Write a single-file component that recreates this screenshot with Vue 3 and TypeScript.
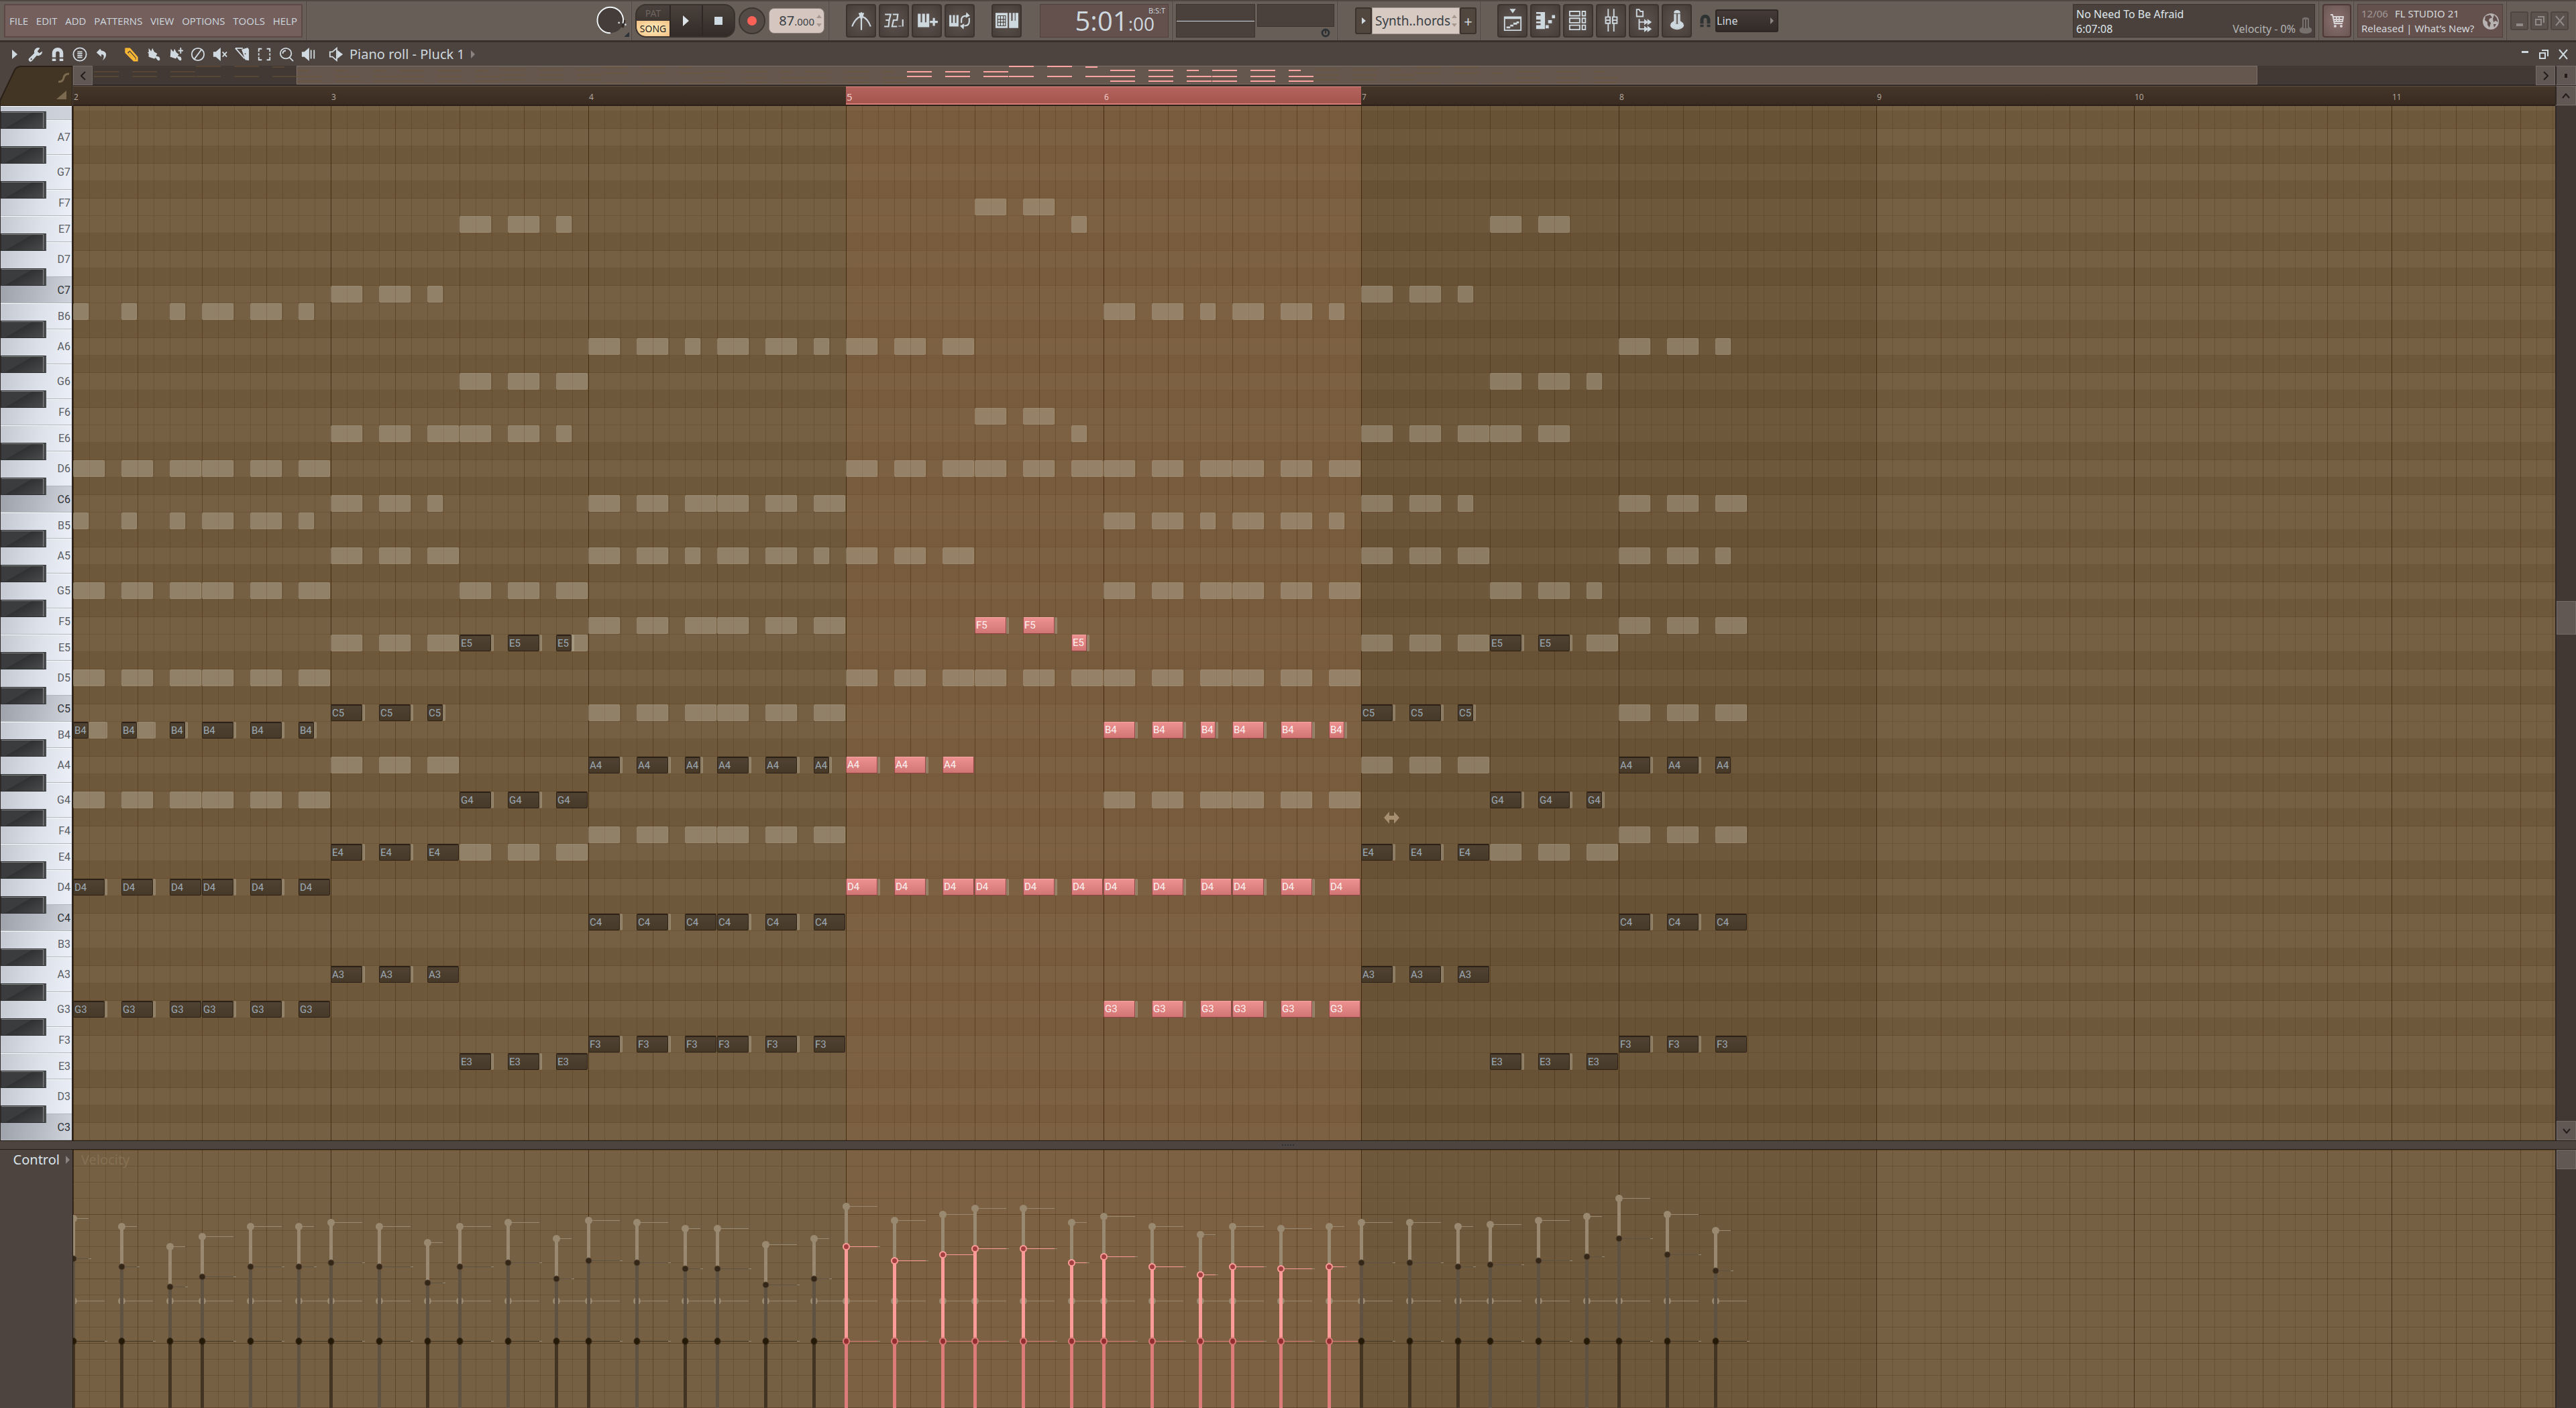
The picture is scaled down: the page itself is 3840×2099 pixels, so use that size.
<script setup lang="ts">
interface Note { key: string; label: string; x: number; y: number; w: number; selected: boolean }
interface Ghost { key: string; x: number; y: number; w: number }
interface Icon { name: string; fill?: string; line?: string; accent?: boolean }

const STEP = 24
const BAR = 384
const ROW = 26
const FIRST_BAR = 2
const PITCHES: Record<string, number> = { C: 0, D: 2, E: 4, F: 5, G: 7, A: 9, B: 11 }

const SIX = '0:2 3:2 6:2 8:2 11:2 14:2'
const MELODY = '0:2 3:2 6:1 8:2 11:2 14:1'
const FRONT = '0:2 3:2 6:2'
const FRONT_SHORT = '0:2 3:2 6:1'
const BACK = '8:2 11:2 14:2'
const BACK_SHORT = '8:2 11:2 14:1'

const phrases: Record<number, [string, string][]> = {
  2: [['B4', '0:1 3:1 6:1 8:2 11:2 14:1'], ['D4', SIX], ['G3', SIX]],
  3: [['C5', FRONT_SHORT], ['E4', FRONT], ['A3', FRONT], ['E5', BACK_SHORT], ['G4', BACK], ['E3', BACK]],
  4: [['A4', MELODY], ['C4', SIX], ['F3', SIX]],
  5: [['A4', FRONT], ['F5', '8:2 11:2'], ['E5', '14:1'], ['D4', SIX]],
  6: [['B4', MELODY], ['D4', SIX], ['G3', SIX]],
  7: [['C5', FRONT_SHORT], ['E4', FRONT], ['A3', FRONT], ['E5', '8:2 11:2'], ['G4', BACK_SHORT], ['E3', BACK]],
  8: [['A4', FRONT_SHORT], ['C4', FRONT], ['F3', FRONT]],
}

const parse = (pattern: string) => pattern.split(' ').map((p) => p.split(':').map(Number) as [number, number])
const pitch = (name: string) => PITCHES[name[0]] + 12 * (Number(name[1]) - 3)
const xOf = (bar: number, step: number) => (bar - FIRST_BAR) * BAR + step * STEP
const yOf = (n: number) => ROW * (59 - n) - 18
const isSelected = (bar: number) => bar === 5 || bar === 6

const notes: Note[] = []
const ghostMap = new Map<string, Ghost>()
const addGhost = (x: number, y: number, w: number) => {
  const key = `${x}-${y}-${w > 8}`
  if (!ghostMap.has(key)) ghostMap.set(key, { key, x, y, w })
}
for (const [barText, lines] of Object.entries(phrases)) {
  const bar = Number(barText)
  for (const [label, pattern] of lines) {
    const n = pitch(label)
    for (const [step, len] of parse(pattern)) {
      const x = xOf(bar, step)
      const w = len * STEP - 1
      notes.push({ key: `${label}-${x}`, label, x, y: yOf(n), w, selected: isSelected(bar) })
      if (n + 12 < 60) addGhost(x, yOf(n + 12), w)
      if (n + 24 < 60) addGhost(x, yOf(n + 24), w)
      const joined = (len === 2 && (step === 6 || step === 14)) || (bar === 8 && step === 6)
      const long = bar === 2 && label === 'B4' && step < 6
      if (long) addGhost(x + w, yOf(n), 28)
      else if (!joined) addGhost(x + w, yOf(n), 4)
    }
  }
}
const ghosts = [...ghostMap.values()]

const overview = [1, 2, 3, 4, 5, 6, 7, 8].flatMap((bar) =>
  phrases[bar === 1 ? 5 : bar].flatMap(([label, pattern]) =>
    parse(pattern).map(([step, len]) => ({
      x: 1214 + 303 * (bar - 5) + Math.round(step * 19),
      y: 29 - pitch(label),
      w: len * 19,
      selected: isSelected(bar),
    })),
  ),
)

const STEPS = [0, 3, 6, 8, 11, 14]
const levels: Record<number, number[]> = {
  2: [1816, 1828, 1858, 1843, 1828, 1828],
  3: [1822, 1828, 1852, 1828, 1822, 1846],
  4: [1819, 1822, 1831, 1831, 1855, 1846],
  5: [1798, 1819, 1810, 1801, 1801, 1822],
  6: [1813, 1828, 1840, 1828, 1831, 1828],
  7: [1822, 1822, 1828, 1825, 1819, 1813],
  8: [1786, 1810, 1834],
}
const shortSteps: Record<number, number[]> = { 2: [0, 3, 6, 14], 3: [6, 14], 4: [6, 14], 5: [14], 6: [6, 14], 7: [6, 14], 8: [6] }
const paleSteps: Record<number, number[]> = { 2: [11, 14], 3: [3, 8, 11], 4: [3, 8], 7: [8, 11, 14] }
const stems = Object.entries(levels).flatMap(([barText, tops]) => {
  const bar = Number(barText)
  return tops.map((top, i) => {
    const step = STEPS[i]
    return {
      x: xOf(bar, step),
      y: top - 1714,
      len: shortSteps[bar].includes(step) ? 23 : 47,
      bass: 47,
      selected: isSelected(bar),
      pale: (paleSteps[bar] ?? []).includes(step),
    }
  })
})

const keys = [7, 6, 5, 4, 3].flatMap((octave) =>
  ['B', 'A', 'G', 'F', 'E', 'D', 'C'].map((name) => ({
    label: `${name}${octave}`,
    tall: 'AGD'.includes(name),
    sharp: !'FC'.includes(name),
    root: name === 'C',
    first: name === 'B' && octave === 7,
  })),
)
const bars = [2, 3, 4, 5, 6, 7, 8, 9, 10, 11]
const menus = ['FILE', 'EDIT', 'ADD', 'PATTERNS', 'VIEW', 'OPTIONS', 'TOOLS', 'HELP']

const tools: Icon[] = [
  { name: 'Tools', fill: 'M17 1a7 7 0 0 0-7 9L2 18a3 3 0 0 0 4 5l8-9a7 7 0 0 0 9-7l-5 3-3-3 4-5zM4 19l2-1 0 3-2 0z' },
  { name: 'Snap', fill: 'M3 17V10a9 9 0 0 1 18 0v7h-6v-7a3 3 0 0 0-6 0v7zM3 19h6v4H3zM15 19h6v4h-6z' },
  { name: 'Stamp', line: 'M12 1.500a10.500 10.500 0 1 0 0 21a10.500 10.500 0 1 0 0-21M8 8h8M8 11h8M8 14h8M8 17h8' },
  { name: 'Undo', fill: 'M9 3 3 9l8 7v-4c5 0 5 4 2 10 8-6 8-15-2-16z' },
]
const modes: Icon[] = [
  { name: 'Draw', line: 'M3 3h6l12 14v5h-5L3 9zM4 8l5-4M8 9l10 11M3 3v6', accent: true },
  { name: 'Paint', fill: 'M4 2l4 5 2-5 3 6 5 3-5 8-9-3zM13 14l8 2c3 5 0 8-3 5zM2 9l4-1 10 8-2 3z' },
  { name: 'Paint drum', fill: 'M4 3l4 5 2-5 3 6 4 3-5 7-9-3zM12 14l8 2c3 5 0 8-3 5zM19 1h2v4h3v2h-3v4h-2V7h-3V5h3z' },
  { name: 'Delete', line: 'M12 2a10 10 0 1 0 0 20a10 10 0 1 0 0-20M6 20 18 4' },
  { name: 'Mute', fill: 'M1 8h4l8-7v22l-8-7H1z', line: 'M16 8l7 8M23 8l-7 8' },
  { name: 'Slice', fill: 'M11 4l10-3 2 3v18l-6-1zM17 10a1 1 0 1 0 .1 0z', line: 'M1 2l15 17M1 2h12' },
  { name: 'Select', line: 'M3 8V3h5M16 3h5v5M21 16v5h-5M8 21H3v-5M3 10v4M21 10v4' },
  { name: 'Zoom', line: 'M11 2a9 8.500 0 1 0 0 17a9 8.500 0 1 0 0-17M17 17l6 6M6 11c0-3 2-5 5-5' },
  { name: 'Playback', fill: 'M1 8h4l8-7v22l-8-7H1zM15 5h2v14h-2zM20 5h2v14h-2z' },
]
const recordModes: Icon[] = [
  { name: 'Metronome', line: 'M16 4v25M3 24c3-8 6-12 12-14M29 24c-3-8-6-12-12-14', fill: 'M12 5h8l-4 12z' },
  { name: 'Countdown', line: 'M3 7h8l-2 8h-5 5l-1 9H2M14 7h7l-1 8h-5l-2 9h7M23 23v1M28 14v10M25 23v1' },
  { name: 'Overdub', fill: 'M3 6h4v12h2V6h4v12h2V6h4v19H3zM24 12h3v4h4v3h-4v4h-3v-4h-4v-3h4z' },
  { name: 'Loop record', fill: 'M1 8h3v11h2V8h3v11h2V8h3v16H1zM25 4l5 5-6 3zM21 28l-5-5 6-3z', line: 'M18 19v-4c0-4 3-6 7-6M29 12v5c0 4-3 6-7 6' },
]
const typing: Icon = { name: 'Typing keyboard', fill: 'M0 5h17v21H0zM19 5h3v11h2V5h3v11h1V5h4v21H19z' }
const windows: Icon[] = [
  { name: 'Playlist', line: 'M3 13h26v21H3zM3 15h26', fill: 'M11 0h10l-5 7zM6 28h6v3H6zM12 25h5v3h-5zM17 22h6v3h-6zM22 20h4v3h-4z' },
  { name: 'Piano roll', fill: 'M1 5h14v27H1v-6h7v-3H1v-3h7v-3H1v-6h7V8H1zM16 26h5v5h-5zM20 18h6v5h-6zM26 10h5v5h-5z' },
  { name: 'Channel rack', line: 'M2 4h16v7H2zM2 15h16v7H2zM2 26h16v7H2zM22 4h5v7h-5zM22 15h5v7h-5zM22 26h5v7h-5z' },
  { name: 'Mixer', line: 'M11 0v12M11 24v12M20 0v12M20 24v12M7 13h7v10H7zM18 13h7v10h-7zM8 18h5M19 18h5' },
  { name: 'Browser', line: 'M4 1h4l2 3h4v8H4zM8 16v16h8M8 21h8', fill: 'M16 16l5 4v-4l7 5-7 5v-4l-5 4zM16 27l5 4v-4l7 5-7 5v-4l-5 4z' },
  { name: 'Plugin picker', line: 'M6 25c0 4 4 7 10 7s10-3 10-7M14 8v16M18 8v16', fill: 'M11 5c1-4 9-4 10 0v2H11zM11 8h2v16h6V8h2v11l5 4c1 5-4 8-10 8s-11-3-10-8l5-4z' },
]
</script>

<template>
  <div class="app">
    <header class="top">
      <div class="sec first">
        <nav class="menu"><button v-for="m in menus" :key="m">{{ m }}</button></nav>
      </div>
      <div class="sec knob-sec">
        <svg class="knob" viewBox="0 0 56 56" aria-hidden="true">
          <circle cx="25" cy="27" r="20" fill="#453d39" />
          <path d="M43 38a21 21 0 0 0 3-11" fill="none" stroke="#352d29" stroke-width="4" />
          <path d="M25 47a20 20 0 1 1 19-15" fill="none" stroke="#f0f6f8" stroke-width="2" />
          <circle cx="38" cy="31" r="1.500" fill="#cfd6da" /><circle cx="48" cy="34" r="1.500" fill="#cfd6da" />
          <path d="M54 45v8h-8z" fill="#2c3336" />
        </svg>
      </div>
      <div class="sec transport">
        <div class="deck">
          <div class="mode"><button class="pat">PAT</button><button class="song">SONG</button></div>
          <button class="deck-btn" aria-label="Play"><svg width="12" height="18" viewBox="0 0 12 18"><path d="M1 1l9 8-9 8z" fill="#dbe3e8" /></svg></button>
          <button class="deck-btn" aria-label="Stop"><svg width="12" height="12"><rect width="12" height="12" fill="#d0dae2" /></svg></button>
        </div>
        <button class="record" aria-label="Record"><i></i></button>
        <div class="tempo"><b>87</b><span>.000</span>
          <svg width="8" height="18" viewBox="0 0 8 18" fill="#a8988f"><path d="M4 0l4 5H0zM4 18l4-5H0z" /></svg>
        </div>
      </div>
      <div class="sec rec">
        <button v-for="i in recordModes" :key="i.name" class="tile" :aria-label="i.name">
          <svg width="34" height="34" viewBox="0 0 32 32"><path v-if="i.fill" :d="i.fill" fill="#ced8df" /><path v-if="i.line" :d="i.line" fill="none" stroke="#ced8df" stroke-width="2" /></svg>
        </button>
        <button class="tile apart" :aria-label="typing.name">
          <svg width="34" height="34" viewBox="0 0 32 32"><path :d="typing.fill" fill="#ced8df" /><path d="M3 9h11v14H3zM3 14h11M3 18h11M7 9v14M11 9v14" fill="none" stroke="#4b423d" /></svg>
        </button>
        <div class="clock"><span class="big">5:01</span><span class="small">:00</span><span class="unit">B:S:T</span></div>
      </div>
      <div class="sec scopes">
        <div class="scope"><i></i></div>
        <div class="meter"><div class="cpu"></div>
          <svg width="18" height="14" viewBox="0 0 18 14"><circle cx="9" cy="7" r="5" fill="none" stroke="#2c3235" stroke-width="3" /><path d="M9 2v6" stroke="#2c3235" stroke-width="2" /></svg>
        </div>
      </div>
      <div class="sec pattern">
        <button class="side" aria-label="Pattern menu"><svg width="6" height="10"><path d="M0 0l6 5-6 5z" fill="#ced8df" /></svg></button>
        <button class="name">Synth..hords<svg width="8" height="18" viewBox="0 0 8 18" fill="#a8988f"><path d="M4 0l4 5H0zM4 18l4-5H0z" /></svg></button>
        <button class="side plus" aria-label="Add pattern">+</button>
      </div>
      <div class="sec wide">
        <button v-for="i in windows" :key="i.name" class="tile" :aria-label="i.name">
          <svg width="30" height="36" viewBox="0 0 32 38"><path v-if="i.fill" :d="i.fill" fill="#ced8df" /><path v-if="i.line" :d="i.line" fill="none" stroke="#ced8df" stroke-width="2" /></svg>
        </button>
        <svg class="mag" width="20" height="20" viewBox="0 0 24 24" fill="#2f3334"><path d="M3 17V10a9 9 0 0 1 18 0v7h-6v-7a3 3 0 0 0-6 0v7zM3 19h6v4H3zM15 19h6v4h-6z" /></svg>
        <div class="snap"><select aria-label="Snap to"><option>Line</option></select><svg width="5" height="10"><path d="M0 0l5 5-5 5z" fill="#8a8683" /></svg></div>
        <div class="hint">
          <p>No Need To Be Afraid</p>
          <p class="row"><span>6:07:08</span><span class="dim">Velocity - 0%</span></p>
          <svg width="22" height="26" viewBox="0 0 22 26"><path d="M6 3c1-3 9-3 10 0v12l4 3c1 5-2 7-9 7s-10-2-9-7l4-3z" fill="#77716d" /><path d="M9 4v13M13 4v13" stroke="#48403b" stroke-width="2" /></svg>
        </div>
      </div>
      <div class="sec shop">
        <button class="tile cart" aria-label="Shop"><svg width="22" height="22" viewBox="0 0 22 22" fill="none" stroke="#d8d4d6" stroke-width="2"><path d="M1 2h3l3 13h12M5 5h15l-1 7H7M10 5v7M14 5v7M6 9h13" /><circle cx="8" cy="19" r="1" /><circle cx="17" cy="19" r="1" /></svg></button>
      </div>
      <div class="sec news-sec">
        <div class="news">
          <p><span class="date">12/06</span>FL STUDIO 21</p>
          <p>Released | What’s New?</p>
          <svg width="26" height="26" viewBox="0 0 26 26"><circle cx="13" cy="13" r="12" fill="#b8b3b3" /><path d="M5 5l7-2 3 4-4 2-1 3 3 3-2 7-3-4v-4L4 11zM18 3l4 5 2 6-4-2-3 2-1-5zM17 17l4 0-3 5z" fill="#63504d" /></svg>
        </div>
      </div>
      <div class="sec win">
        <button aria-label="Minimise"><svg width="12" height="16"><path d="M1 12h10v4H1z" fill="#8f8a86" /></svg></button>
        <button aria-label="Restore"><svg width="14" height="16" viewBox="0 0 14 16" fill="none" stroke="#8f8a86" stroke-width="2"><path d="M4 2h9v9M1 6h8v8H1z" /></svg></button>
        <button aria-label="Close"><svg width="14" height="16" viewBox="0 0 14 16" stroke="#8f8a86" stroke-width="2"><path d="M1 1l12 14M13 1L1 15" /></svg></button>
      </div>
    </header>

    <div class="bar2">
      <svg class="tri" width="8" height="14"><path d="M0 0l8 7-8 7z" fill="#ced8df" /></svg>
      <button v-for="i in tools" :key="i.name" class="ico" :aria-label="i.name">
        <svg width="22" height="22" viewBox="0 0 24 24"><path v-if="i.fill" :d="i.fill" fill="#d0d9e0" /><path v-if="i.line" :d="i.line" fill="none" stroke="#d0d9e0" stroke-width="2" /></svg>
      </button>
      <span class="split"></span>
      <button v-for="i in modes" :key="i.name" class="ico" :aria-label="i.name">
        <svg width="22" height="22" viewBox="0 0 24 24"><path v-if="i.fill" :d="i.fill" fill="#d0d9e0" /><path v-if="i.line" :d="i.line" fill="none" :stroke="i.accent ? '#fdb933' : '#d0d9e0'" :stroke-width="i.accent ? 3 : 2" /></svg>
      </button>
      <span class="split"></span>
      <svg width="22" height="22" viewBox="0 0 24 24"><path d="M2 8h4l7-6v20l-7-6H2z" fill="none" stroke="#d0d9e0" stroke-width="2" /><path d="M14 5l9 7-9 7z" fill="#d0d9e0" /></svg>
      <h1>Piano roll - Pluck 1</h1>
      <svg width="6" height="12"><path d="M0 0l6 6-6 6z" fill="#8a8380" /></svg>
      <div class="child-win">
        <button aria-label="Minimise"><svg width="12" height="16"><path d="M1 3h10v3H1z" fill="#ced8df" /></svg></button>
        <button aria-label="Restore"><svg width="14" height="16" viewBox="0 0 14 16" fill="none" stroke="#ced8df" stroke-width="2"><path d="M4 2h9v9M1 6h8v8H1z" /></svg></button>
        <button aria-label="Close"><svg width="14" height="16" viewBox="0 0 14 16" stroke="#ced8df" stroke-width="2"><path d="M1 1l12 14M13 1L1 15" /></svg></button>
      </div>
    </div>

    <div class="heads">
      <svg class="corner" width="108" height="60" viewBox="0 0 108 60">
        <path d="M0 60V52L22 6Q25 1 32 1H108V60z" fill="#433523" stroke="#2a2017" stroke-width="2" />
        <path d="M87 24q7 0 8-6 1-6 8-6" fill="none" stroke="#7b6a50" stroke-width="3" /><path d="M99 37v13H84z" fill="#7b6a50" />
      </svg>
      <div class="heads-main">
        <div class="scroller">
          <button class="sb" aria-label="Scroll left"><svg width="8" height="14" fill="none" stroke="#231c19" stroke-width="2"><path d="M7 1L1 7l6 6" /></svg></button>
          <div class="track">
            <div class="thumb"></div>
            <svg class="mini"><rect v-for="(o, i) in overview" :key="i" :x="o.x" :y="o.y" :width="o.w - 1" height="2" :fill="o.selected ? '#ffa5a3' : '#6b5336'" :opacity="o.selected ? 1 : 0.5" /></svg>
          </div>
          <button class="sb" aria-label="Scroll right"><svg width="8" height="14" fill="none" stroke="#231c19" stroke-width="2"><path d="M1 1l6 6-6 6" /></svg></button>
          <button class="sb last" aria-label="Zoom"><svg width="4" height="6"><path d="M0 0h4v6H0z" fill="#231c19" /></svg></button>
        </div>
        <div class="ruler-row">
          <ol class="ruler">
            <li v-for="b in bars" :key="b" :class="{ on: b === 5 || b === 6, start: b === 5 }">{{ b }}</li>
          </ol>
          <button class="sb last" aria-label="Scroll up"><svg width="12" height="8" fill="none" stroke="#231c19" stroke-width="2"><path d="M1 7l5-6 5 6" /></svg></button>
        </div>
      </div>
    </div>

    <main class="roll">
      <div class="keys">
        <div v-for="k in keys" :key="k.label" class="key" :class="{ tall: k.tall, sharp: k.sharp, root: k.root, first: k.first }"><span>{{ k.label }}</span></div>
      </div>
      <div class="canvas">
        <i v-for="g in ghosts" :key="g.key" class="ghost" :style="{ left: g.x + 'px', top: g.y + 'px', width: g.w + 'px' }"></i>
        <div v-for="n in notes" :key="n.key" class="note" :class="{ sel: n.selected }" :style="{ left: n.x + 'px', top: n.y + 'px', width: n.w + 'px' }">{{ n.label }}</div>
        <svg class="cursor" width="23" height="18" viewBox="0 0 23 18"><path d="M0 9l8-9v6h7V0l8 9-8 9v-6H8v6z" fill="#a58f70" /></svg>
      </div>
      <div class="vbar"><div class="vthumb"></div><button class="sb down" aria-label="Scroll down"><svg width="12" height="8" fill="none" stroke="#231c19" stroke-width="2"><path d="M1 1l5 6 5-6" /></svg></button></div>
    </main>

    <div class="splitter"><i v-for="d in 5" :key="d"></i></div>

    <section class="control">
      <div class="control-head"><button>Control<svg width="6" height="12"><path d="M0 0l6 6-6 6z" fill="#8a8380" /></svg></button></div>
      <div class="lane">
        <span class="lane-name">Velocity</span>
        <svg class="stems">
          <g v-for="s in stems" :key="s.x" fill="#998970">
            <rect :x="s.x - 2" :y="s.y" width="5" height="60" />
            <rect :x="s.x" :y="s.y" :width="s.len" height="1" />
            <ellipse :cx="s.x + 0.5" :cy="s.y + 0.5" rx="5.500" ry="5.500" />
            <rect :x="s.x" y="225" :width="s.bass" height="1" />
            <ellipse :cx="s.x + 0.5" cy="225.500" rx="5.500" ry="5.500" />
            <rect :x="s.x" :y="s.y + 60" :width="s.len + 4" height="1" />
            <rect :x="s.x" y="285" :width="s.bass + 4" height="1" />
          </g>
          <g v-for="s in stems" :key="s.x" :class="{ hot: s.selected, pale: s.pale }" class="stem">
            <rect class="up" :x="s.x - 2" :y="s.y + 60" width="5" :height="225 - s.y" />
            <rect class="up" :x="s.x" :y="s.y + 60" :width="s.len" height="1" />
            <rect class="low" :x="s.x - 2" y="285" width="5" height="2000" />
            <rect class="low-line" :x="s.x" y="285" :width="s.bass" height="1" />
            <ellipse class="dot" :cx="s.x + 0.5" :cy="s.y + 60.500" rx="4.500" ry="4.500" />
            <ellipse class="dot base" :cx="s.x + 0.5" cy="285.500" rx="4.500" ry="5" />
          </g>
        </svg>
      </div>
      <div class="vbar"><div class="vthumb top-thumb"></div></div>
    </section>
  </div>
</template>

<style>
body { margin: 0; background: #4d443f; }
</style>

<style scoped>
.app { display: flex; flex-direction: column; min-height: 100vh; overflow: hidden; font-family: "Noto Sans", sans-serif; font-size: 16px; color: #ced8df; background: #4d443f; }
*, *::after { box-sizing: border-box; }
button, select { font: inherit; color: inherit; background: none; border: 0; padding: 0; margin: 0; }
p, h1, ol { margin: 0; padding: 0; font-weight: 400; }
svg { display: block; flex: none; }

.top { display: flex; flex: none; height: 63px; background: #685e58; border-top: 2px solid #514742; border-bottom: 3px solid #3a302b; }
.sec { display: flex; flex: none; align-items: center; border-right: 1px solid #514742; box-shadow: inset -1px 0 #6f6560; padding-bottom: 4px; padding-top: 4px; }
.first { width: 457px; padding-left: 6px; }
.menu { display: flex; justify-content: space-between; align-items: center; width: 445px; height: 50px; padding: 0 6px; background: #745f5d; border: 2px solid #5c4844; font-family: "Open Sans", sans-serif; font-size: 15px; }
.knob-sec { width: 485px; justify-content: flex-end; }
.knob { width: 56px; height: 54px; }
.transport { width: 294px; padding-left: 5px; }
.deck { display: flex; height: 50px; width: 149px; border-radius: 16px; background: linear-gradient(#4a413c, #332b27); border: 2px solid #3a322d; overflow: hidden; }
.mode { width: 49px; display: flex; flex-direction: column; font-size: 14px; }
.mode button { flex: 1; }
.pat { color: #6c6561; }
.song { color: #2d2521; background: radial-gradient(#fff0c0, #f3bf82); border-radius: 0 0 0 12px; font-size: 14px; }
.deck-btn { flex: 1; display: flex; align-items: center; justify-content: center; border-left: 2px solid #2e2723; }
.record { width: 40px; height: 40px; margin-left: 5px; border-radius: 50%; background: #554b46; border: 2px solid #3d3530; display: flex; align-items: center; justify-content: center; }
.record i { width: 14px; height: 14px; border-radius: 50%; background: #fc6158; }
.tempo { display: flex; align-items: baseline; justify-content: flex-end; width: 83px; height: 38px; margin-left: 5px; padding-right: 3px; border-radius: 8px; background: #d5c7c0; border: 1px solid #8c807a; color: #3a4045; font-size: 15px; line-height: 36px; }
.tempo b { font-weight: 400; font-size: 20px; }
.tempo svg { margin-left: 3px; align-self: center; }
.rec { width: 512px; padding-left: 25px; gap: 4px; }
.tile { display: flex; align-items: center; justify-content: center; width: 45px; height: 50px; border: 2px solid #3c332f; border-radius: 4px; background: radial-gradient(#5f5550, #463d38); }
.apart { margin-left: 21px; }
.clock { position: relative; display: flex; align-items: baseline; justify-content: flex-end; width: 192px; height: 50px; margin-left: 23px; padding-right: 20px; background: #64514e; border: 1px solid #50403c; line-height: 48px; font-family: "Open Sans", sans-serif; }
.big { font-size: 40px; }
.small { font-size: 28px; }
.unit { position: absolute; right: 4px; top: 3px; font-size: 11px; line-height: 12px; }
.scopes { width: 246px; padding-left: 5px; gap: 3px; }
.scope { display: flex; align-items: center; width: 118px; height: 50px; background: #4a413c; border: 1px solid #3c332f; }
.scope i { width: 100%; height: 1px; background: #ced8df; }
.meter { width: 115px; height: 50px; display: flex; flex-direction: column; align-items: flex-end; }
.cpu { width: 115px; height: 35px; background: #4a413c; border: 1px solid #3c332f; }
.meter svg { margin: 2px 4px 0 0; }
.pattern { width: 213px; padding-left: 26px; }
.side { display: flex; align-items: center; justify-content: center; width: 25px; height: 40px; border: 2px solid #3c332f; border-radius: 3px; background: #51473f; }
.plus { font-size: 22px; }
.name { display: flex; align-items: center; justify-content: space-between; width: 131px; height: 40px; padding: 0 3px 0 4px; background: #d7cac3; border: 1px solid #a2958e; color: #3a4045; font-size: 19px; }
.wide { flex: 1 1 auto; padding-left: 25px; gap: 4px; }
.mag { margin: 0 1px 0 6px; }
.snap { display: flex; align-items: center; width: 94px; height: 34px; padding: 0 5px 0 0; border: 2px solid #2e2723; border-radius: 3px; background: linear-gradient(#443b37, #322a26); }
.snap select { flex: 1; appearance: none; }
.hint { position: relative; width: 361px; height: 50px; margin: 0 5px 0 auto; padding: 3px 28px 0 4px; background: #4a413c; border: 1px solid #3b322e; line-height: 22px; color: #dfe7ec; }
.hint .row { display: flex; justify-content: space-between; }
.hint .dim { color: #b3b5b5; }
.hint svg { position: absolute; right: 2px; bottom: 4px; }
.shop { width: 52px; padding-left: 5px; }
.cart { width: 43px; background: radial-gradient(#8a7270, #6b5553); border-color: #4d3835; }
.news-sec { width: 228px; padding-left: 5px; }
.news { position: relative; width: 217px; height: 50px; padding: 2px 5px; background: #64514e; border: 1px solid #50403c; font-size: 15px; line-height: 22px; white-space: nowrap; color: #d6d9dc; }
.date { color: #a19796; margin-right: 10px; }
.news svg { position: absolute; right: 4px; top: 12px; }
.win { width: 103px; padding-left: 5px; gap: 3px; border-right: 0; }
.win button { display: flex; align-items: center; justify-content: center; width: 27px; height: 28px; background: #5c524d; border: 2px solid #4e4540; border-radius: 3px; }

.bar2 { display: flex; flex: none; align-items: center; height: 35px; padding-left: 18px; background: #4d443f; }
.tri { margin-right: 10px; }
.ico { display: flex; justify-content: center; width: 33px; }
.split { width: 11px; }
.split + svg { margin-left: 3px; }
.bar2 h1 { font-size: 20px; line-height: 32px; margin: 0 9px; }
.child-win { display: flex; gap: 15px; margin: 0 12px 0 auto; }

.heads { display: flex; flex: none; height: 60px; }
.corner { width: 108px; }
.heads-main { flex: 1; min-width: 0; margin-left: 1px; display: flex; flex-direction: column; }
.scroller { display: flex; height: 30px; background: #423934; border-bottom: 2px solid #2f2723; }
.sb { flex: none; display: flex; align-items: center; justify-content: center; width: 29px; height: 29px; background: #625853; border: 1px solid #756b66; }
.last { width: 31px; border-left: 2px solid #2f2723; }
.track { position: relative; flex: 1; display: flex; }
.thumb { flex: 1; margin: 0 415px 0 304px; background: #65574e; border: 1px solid #7c706a; }
.mini { position: absolute; left: 0; top: 0; width: 100%; height: 100%; }
.ruler-row { display: flex; height: 30px; }
.ruler { flex: 1; min-width: 0; overflow: hidden; display: flex; list-style: none; background: linear-gradient(#45362a, #392b20); border-top: 1px solid #5d4c40; border-bottom: 2px solid #2c2119; }
.ruler li { flex: none; width: 384px; padding: 7px 0 0 1px; font-size: 12px; line-height: 18px; font-family: "Open Sans", sans-serif; color: #b5aca2; }
.ruler .on { background: linear-gradient(#b4645d, #a5544e); border-bottom: 2px solid #d67f79; box-shadow: inset 0 1px #d67f79; color: #f7d4d0; }
.ruler .start { font-size: 15px; padding-top: 6px; }

.roll { display: flex; flex: none; }
.keys { position: relative; flex: none; width: 109px; overflow: hidden; border-right: 2px solid #2b241e; border-left: 1px solid #2f2723; }
.key { position: relative; display: flex; align-items: center; justify-content: flex-end; height: 39px; padding-right: 2px; background: linear-gradient(100deg, #c3c7cf, #dde1e9 55%, #eceff7); border-bottom: 1px solid #b3b6bd; box-shadow: inset 0 1px #f6f8fb; font-family: "Roboto", sans-serif; font-size: 16px; color: #595d63; }
.key.tall { height: 52px; }
.key.first { height: 21px; align-items: flex-end; }
.key.first span { line-height: 34px; height: 34px; }
.key.root { background: linear-gradient(100deg, #9da1a9, #b4b8c0 50%, #d0d4dc); color: #2d3035; box-shadow: none; }
.key.sharp::after { content: ""; position: absolute; z-index: 1; left: 0; bottom: -14px; width: 68px; height: 26px; background: linear-gradient(150deg, #3b3c3d 45%, #303132 46%, #4a4b4d); border: 1px solid #2c2d2e; border-right: 4px solid #4a4b4c; box-shadow: inset -1px 1px #858789; }

.canvas, .lane { position: relative; flex: 1; min-width: 0; overflow: hidden; background-color: #766043; }
.canvas {
  background-image:
    repeating-linear-gradient(90deg, rgba(48, 26, 0, .55) 0 1px, transparent 1px 384px),
    repeating-linear-gradient(90deg, rgba(60, 35, 8, .28) 0 1px, transparent 1px 96px),
    repeating-linear-gradient(90deg, rgba(70, 42, 12, .25) 0 1px, transparent 1px 24px),
    linear-gradient(90deg, transparent 1152px, rgba(180, 128, 92, .2) 1152px 1920px, transparent 1920px),
    linear-gradient(90deg, transparent 1152px, rgba(74, 52, 27, .17) 1152px 2688px, transparent 2688px),
    linear-gradient(transparent 25px, rgba(70, 42, 12, .2) 25px),
    linear-gradient(rgba(74, 50, 20, .18) 26px, transparent 26px 52px, rgba(74, 50, 20, .18) 52px 78px, transparent 78px 104px, rgba(74, 50, 20, .18) 104px 130px, transparent 130px 182px, rgba(74, 50, 20, .18) 182px 208px, transparent 208px 234px, rgba(74, 50, 20, .18) 234px 260px, transparent 260px);
  background-size: auto, auto, auto, auto, auto, 100% 26px, 100% 312px;
  background-position: 0 0, 0 0, 0 0, 0 0, 0 0, 0 8px, 0 8px;
}
.ghost { position: absolute; height: 25px; border-radius: 2px; background: rgba(190, 185, 165, .38); border: 1px solid rgba(190, 175, 140, .16); }
.note { position: absolute; height: 25px; padding-left: 1px; border: 1px solid #2b2117; border-top-width: 2px; border-radius: 2px; background: linear-gradient(#504232, #473928); color: #9ba9b4; font: 15px/22px "Roboto", sans-serif; }
.note.sel { background: linear-gradient(#ec9090, #d27575); border-color: #8f4546; border-top: 1px solid #f6a5a5; line-height: 23px; color: #fdf2f0; }
.cursor { position: absolute; left: 1954px; top: 1052px; }

.vbar { flex: none; display: flex; flex-direction: column; width: 31px; background: #413833; border-left: 2px solid #2f2723; }
.vthumb { height: 50px; margin-top: 738px; background: #625853; border: 1px solid #756b66; }
.top-thumb { height: 29px; margin-top: 0; }
.down { margin-top: auto; }

.splitter { display: flex; flex: none; align-items: center; justify-content: center; gap: 2px; height: 14px; background: #4d443f; border-top: 1px solid #241c17; border-bottom: 1px solid #241c17; }
.splitter i { width: 2px; height: 2px; background: #2b3237; }

.control { display: flex; flex: 1; min-height: 300px; }
.control-head { flex: none; display: flex; justify-content: flex-end; align-items: flex-start; width: 109px; padding: 1px 4px 0 0; border-right: 1px solid #241c17; }
.control-head button { display: flex; align-items: center; gap: 9px; font-size: 20px; line-height: 28px; color: #d9e3ea; }
.lane {
  background-image:
    repeating-linear-gradient(90deg, rgba(48, 26, 0, .55) 0 1px, transparent 1px 384px),
    repeating-linear-gradient(90deg, rgba(60, 35, 8, .28) 0 1px, transparent 1px 96px),
    repeating-linear-gradient(90deg, rgba(70, 42, 12, .25) 0 1px, transparent 1px 24px),
    repeating-linear-gradient(rgba(60, 35, 8, .3) 0 1px, transparent 1px 96px),
    repeating-linear-gradient(rgba(70, 42, 12, .25) 0 1px, transparent 1px 24px),
    linear-gradient(90deg, transparent 1152px, rgba(180, 128, 92, .2) 1152px 1920px, transparent 1920px),
    linear-gradient(90deg, transparent 1152px, rgba(74, 52, 27, .17) 1152px 2688px, transparent 2688px);
}
.lane-name { position: absolute; left: 12px; top: 1px; font-size: 20px; line-height: 28px; color: #857053; }
.stems { position: absolute; inset: 0; width: 100%; height: 100%; }
.stem .up { fill: #5f5242; }
.stem .low, .stem .low-line { fill: #433421; }
.stem.pale .low { fill: #5f5242; }
.stem .dot { fill: #352718; stroke: #5a4a38; stroke-width: 1px; }
.stem .base { fill: #251908; stroke: #3d2e1a; }
.stem.hot .up { fill: #fc9b98; }
.stem.hot .low, .stem.hot .low-line { fill: #dc7b79; }
.stem.hot .dot { fill: #a24041; stroke: #fc9b98; stroke-width: 2px; }
.stem.hot .base { fill: #923031; stroke: #dc7b79; }
</style>
